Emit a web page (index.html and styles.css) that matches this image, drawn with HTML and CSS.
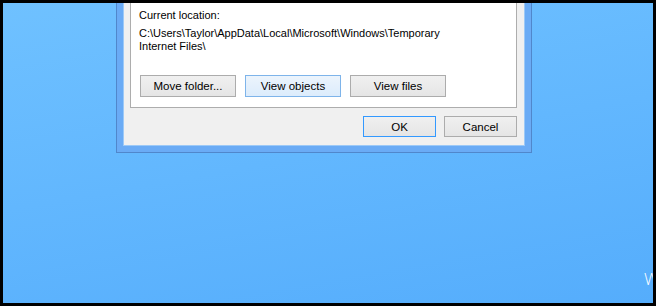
FILE: index.html
```html
<!DOCTYPE html>
<html>
<head>
<meta charset="utf-8">
<link rel="stylesheet" href="styles.css">
</head>
<body>
<div class="screen">
  <div class="window">
    <div class="client">
      <div class="panel">
        <div class="label">Current location:</div>
        <div class="path">C:\Users\Taylor\AppData\Local\Microsoft\Windows\Temporary<br>Internet Files\</div>
        <div class="actions">
          <button class="btn wide">Move folder...</button>
          <button class="btn wide hover">View objects</button>
          <button class="btn wide">View files</button>
        </div>
      </div>
      <div class="footer">
        <button class="btn small default">OK</button>
        <button class="btn small">Cancel</button>
      </div>
    </div>
  </div>
  <div class="watermark">Windows 8 Pro</div>
</div>
</body>
</html>
```
FILE: styles.css
```css
html, body {
  margin: 0;
  padding: 0;
  background: #000;
}
body {
  padding: 3px;
  width: 650px;
  height: 300px;
}
.screen {
  position: relative;
  width: 650px;
  height: 300px;
  overflow: hidden;
  background: linear-gradient(170deg, #6fc1ff 0%, #62b7fe 50%, #55adfc 100%);
  font-family: "Liberation Sans", Arial, sans-serif;
  font-size: 11px;
  color: #000;
}
.window {
  position: absolute;
  left: 113px;
  top: -20px;
  width: 402px;
  border: 1px solid #5087cb;
  background: #6aabf5;
  padding: 6px;
}
.client {
  border: 1px solid #9cc9f7;
  background: #f0f0f0;
  padding: 6px 7px 8px 6px;
}
.panel {
  background: #fff;
  border: 1px solid #adadad;
  padding: 11px 8px 10px 8px;
}
.label {
  line-height: 13px;
}
.path {
  line-height: 13px;
  margin-top: 5px;
}
.actions {
  display: flex;
  gap: 9px;
  margin-top: 22px;
  padding-left: 1px;
}
.btn {
  box-sizing: border-box;
  font-family: inherit;
  font-size: 11.5px;
  color: #000;
  border: 1px solid #acacac;
  background: linear-gradient(#f0f0f0, #e5e5e5);
  padding: 0;
  margin: 0;
  text-align: center;
}
.wide {
  width: 96px;
  height: 22px;
}
.hover {
  border-color: #7eb4ea;
  background: linear-gradient(#ecf4fc, #dcecfc);
}
.footer {
  display: flex;
  justify-content: flex-end;
  gap: 8px;
  margin-top: 8px;
}
.small {
  width: 73px;
  height: 21px;
}
.default {
  border-color: #3399ff;
}
.watermark {
  position: absolute;
  left: 641px;
  top: 264px;
  font-family: "Open Sans", "Liberation Sans", sans-serif;
  font-weight: 300;
  font-size: 17px;
  color: #fff;
  white-space: nowrap;
}
```
